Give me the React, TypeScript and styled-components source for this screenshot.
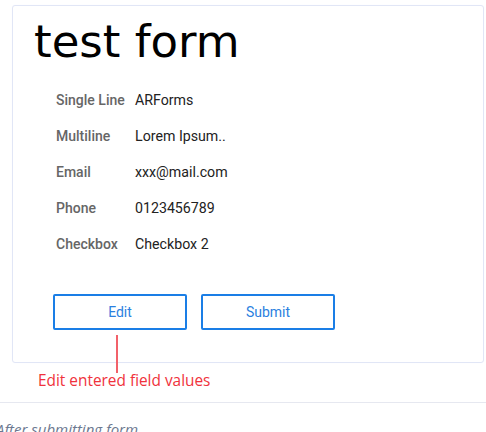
import React from "react";
import styled, { createGlobalStyle } from "styled-components";

const Global = createGlobalStyle`
  html, body { margin: 0; padding: 0; background: #fff; }
  body { width: 486px; height: 432px; overflow: hidden; }
`;

const Page = styled.div`
  position: relative;
  width: 486px;
  height: 432px;
  overflow: hidden;
  padding-top: 5px;
  box-sizing: border-box;
`;

const Card = styled.div`
  margin-left: 12px;
  width: 472px;
  height: 358px;
  box-sizing: border-box;
  border: 1px solid #e1e6f6;
  border-radius: 3px;
  box-shadow: 0 0 1px #eef1fb;
  padding: 10px 0 0 21px;
  display: flex;
  flex-direction: column;
`;

const Title = styled.h1`
  margin: 0;
  font-family: "DejaVu Sans", sans-serif;
  font-weight: 400;
  font-size: 45px;
  line-height: 51px;
  color: #000;
`;

const Rows = styled.div`
  margin-top: 15px;
  padding-left: 22px;
  display: flex;
  flex-direction: column;
`;

const Row = styled.div`
  display: flex;
  align-items: center;
  height: 36px;
  font-family: Roboto, sans-serif;
  font-size: 14px;
`;

const Label = styled.span`
  width: 79px;
  color: #666;
  font-weight: 500;
`;

const Value = styled.span`
  color: #222;
  font-size: 14.2px;
`;

const Buttons = styled.div`
  margin-top: 32px;
  padding-left: 19px;
  display: flex;
  gap: 14px;
`;

const Button = styled.button`
  width: 134px;
  height: 36px;
  box-sizing: border-box;
  border: 2px solid #1a7ee6;
  border-radius: 2px;
  background: #fff;
  color: #2b7fe0;
  font-family: Roboto, sans-serif;
  font-size: 14px;
  padding: 0;
`;

const Pointer = styled.div`
  position: absolute;
  left: 116px;
  top: 335px;
  width: 2px;
  height: 38px;
  background: #f2616a;
`;

const Note = styled.div`
  position: absolute;
  left: 38px;
  top: 369px;
  font-family: "Open Sans", sans-serif;
  font-size: 15.4px;
  line-height: 24px;
  color: #f0323c;
`;

const Divider = styled.hr`
  position: absolute;
  left: 0;
  top: 402px;
  width: 486px;
  margin: 0;
  border: none;
  border-top: 1px solid #e6e8f0;
`;

const Caption = styled.div`
  position: absolute;
  left: -4px;
  top: 419px;
  font-family: "Open Sans", sans-serif;
  font-style: italic;
  font-size: 15px;
  line-height: 20px;
  color: #6c7890;
`;

const fields: [string, string][] = [
  ["Single Line", "ARForms"],
  ["Multiline", "Lorem Ipsum.."],
  ["Email", "xxx@mail.com"],
  ["Phone", "0123456789"],
  ["Checkbox", "Checkbox 2"],
];

export default function App() {
  return (
    <>
      <Global />
      <Page>
        <Card>
          <Title>test form</Title>
          <Rows>
            {fields.map(([l, v]) => (
              <Row key={l}>
                <Label>{l}</Label>
                <Value>{v}</Value>
              </Row>
            ))}
          </Rows>
          <Buttons>
            <Button>Edit</Button>
            <Button>Submit</Button>
          </Buttons>
        </Card>
        <Pointer />
        <Note>Edit entered field values</Note>
        <Divider />
        <Caption>After submitting form</Caption>
      </Page>
    </>
  );
}
